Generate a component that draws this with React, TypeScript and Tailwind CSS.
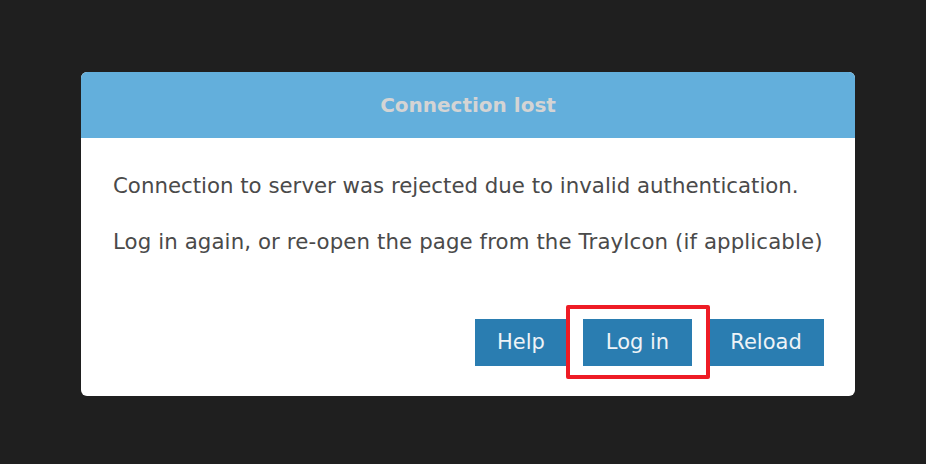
export default function App() {
  return (
    <div
      className="w-[926px] h-[464px] bg-[#1f1f1f] pt-[72px] pl-[81px]"
      style={{ fontFamily: '"DejaVu Sans", sans-serif' }}
    >
      <div className="w-[774px] h-[324px] bg-white rounded-[6px] overflow-hidden flex flex-col">
        <div className="h-[66px] bg-[#63afdc] flex items-center justify-center">
          <h1 className="text-[20px] font-bold text-[#d4d4d4]">Connection lost</h1>
        </div>
        <div className="px-[32px] pt-[34px] text-[21.3px] text-[#4a4a4a] leading-[28px]">
          <p>Connection to server was rejected due to invalid authentication.</p>
          <p className="mt-[28px] tracking-[0.1px]">Log in again, or re-open the page from the TrayIcon (if applicable)</p>
        </div>
        <div className="mt-auto mb-[30px] pr-[31px] flex justify-end gap-[16px]">
          <button className="h-[47px] w-[92px] bg-[#2a7db1] text-[21px] text-[#eef3f7]">Help</button>
          <div className="relative">
            <button className="h-[47px] w-[109px] bg-[#2a7db1] text-[21px] text-[#eef3f7]">Log in</button>
            <div className="absolute -left-[17px] -right-[18px] -top-[14px] -bottom-[13px] border-[4px] border-[#ee1c25] rounded-[2px]" />
          </div>
          <button className="h-[47px] w-[116px] bg-[#2a7db1] text-[21px] text-[#eef3f7]">Reload</button>
        </div>
      </div>
    </div>
  );
}
